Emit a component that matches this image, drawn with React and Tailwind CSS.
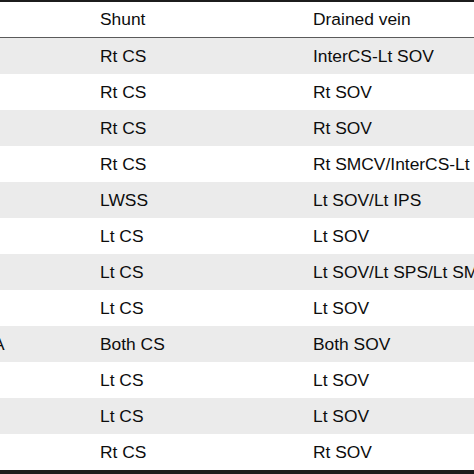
import React from 'react';

const rows = [
    ['', 'Rt CS', 'InterCS-Lt SOV'],
    ['', 'Rt CS', 'Rt SOV'],
    ['', 'Rt CS', 'Rt SOV'],
    ['', 'Rt CS', 'Rt SMCV/InterCS-Lt SOV'],
    ['', 'LWSS', 'Lt SOV/Lt IPS'],
    ['', 'Lt CS', 'Lt SOV'],
    ['', 'Lt CS', 'Lt SOV/Lt SPS/Lt SMCV'],
    ['', 'Lt CS', 'Lt SOV'],
    ['A', 'Both CS', 'Both SOV'],
    ['', 'Lt CS', 'Lt SOV'],
    ['', 'Lt CS', 'Lt SOV'],
    ['', 'Rt CS', 'Rt SOV'],
];

export default function App() {
    return (
        <div
            className="w-[474px] h-[474px] overflow-hidden bg-white text-[17.4px] text-[#0d0d0d] whitespace-nowrap"
            style={{ fontFamily: '"Liberation Sans", Arial, sans-serif' }}
        >
            <div className="border-t-2 border-[#1c1c1c]">
                <div className="flex items-center h-[36px] border-b border-[#5a5a5a]">
                    <div className="w-[100px] shrink-0"></div>
                    <div className="w-[213px] shrink-0">Shunt</div>
                    <div>Drained vein</div>
                </div>
                {rows.map((r, i) => (
                    <div
                        key={i}
                        className={`flex items-center h-[36px] ${i % 2 === 0 ? 'bg-[#ebebeb]' : 'bg-white'}`}
                    >
                        <div className="w-[100px] shrink-0 overflow-hidden">
                            {r[0] && <span className="block -ml-[7px]">{r[0]}</span>}
                        </div>
                        <div className="w-[213px] shrink-0">{r[1]}</div>
                        <div>{r[2]}</div>
                    </div>
                ))}
                <div className="border-t-4 border-[#1c1c1c]"></div>
            </div>
        </div>
    );
}
